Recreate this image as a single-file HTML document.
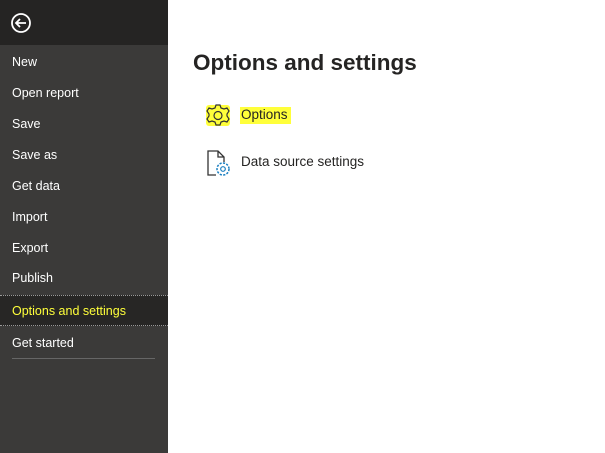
<!DOCTYPE html>
<html><head><style>
body{margin:0;width:605px;height:453px;background:#fff;font-family:"Segoe UI","Liberation Sans",sans-serif;position:relative;overflow:hidden}
#side{position:absolute;left:0;top:0;width:168px;height:453px;background:#3b3a39}
#top{position:absolute;left:0;top:0;width:168px;height:45px;background:#252423}
.it{position:absolute;left:12px;color:#fff;font-size:12.5px}
#sel{position:absolute;left:0;top:295px;width:168px;height:29px;background:#272625;border-top:1px dotted #999;border-bottom:1px dotted #999}
#sep{position:absolute;left:12px;top:358px;width:143px;height:1px;background:#666}
h1{position:absolute;left:193px;top:50px;margin:0;font-size:22.5px;font-weight:600;color:#252423}
.t{position:absolute;font-size:13.5px;color:#252423}
</style></head><body>
<div id="side"></div><div id="top"></div>
<svg style="position:absolute;left:10px;top:12px" width="22" height="22" viewBox="0 0 22 22"><circle cx="11" cy="11" r="9" fill="none" stroke="#fff" stroke-width="1.8"/><path d="M16 11H6M10 7l-4 4 4 4" fill="none" stroke="#fff" stroke-width="1.8"/></svg>
<div class="it" style="top:55px">New</div>
<div class="it" style="top:86px">Open report</div>
<div class="it" style="top:117px">Save</div>
<div class="it" style="top:148px">Save as</div>
<div class="it" style="top:179px">Get data</div>
<div class="it" style="top:210px">Import</div>
<div class="it" style="top:241px">Export</div>
<div class="it" style="top:271px">Publish</div>
<div id="sel"></div>
<div class="it" style="top:304px;color:#ffff3a">Options and settings</div>
<div class="it" style="top:336px">Get started</div>
<div id="sep"></div>
<h1>Options and settings</h1>
<div style="position:absolute;left:206px;top:105px;width:24px;height:21px;background:#ffff3a;border-radius:3px"></div>
<svg style="position:absolute;left:205px;top:103px" width="26" height="25" viewBox="0 0 26 25"><path d="M11 2h4l1 3 3 1 3-1 2 3-2 3v2l2 3-2 3-3-1-3 1-1 3h-4l-1-3-3-1-3 1-2-3 2-3v-2l-2-3 2-3 3 1 3-1z" fill="none" stroke="#333" stroke-width="1.2"/><circle cx="13" cy="12.5" r="4" fill="none" stroke="#333" stroke-width="1.2"/></svg>
<div style="position:absolute;left:240px;top:107px;width:51px;height:17px;background:#ffff3a"></div>
<div class="t" style="left:241px;top:107px">Options</div>
<svg style="position:absolute;left:206px;top:149px" width="26" height="30" viewBox="0 0 26 30"><path d="M10 26H2V2h10l6 6v5M12 2v6h6" fill="none" stroke="#333" stroke-width="1.3"/><circle cx="17" cy="20" r="6" fill="none" stroke="#1a7fc1" stroke-width="1.5" stroke-dasharray="2.2 1.3"/><circle cx="17" cy="20" r="2.3" fill="none" stroke="#1a7fc1" stroke-width="1.2"/></svg>
<div class="t" style="left:241px;top:154px">Data source settings</div>
</body></html>
